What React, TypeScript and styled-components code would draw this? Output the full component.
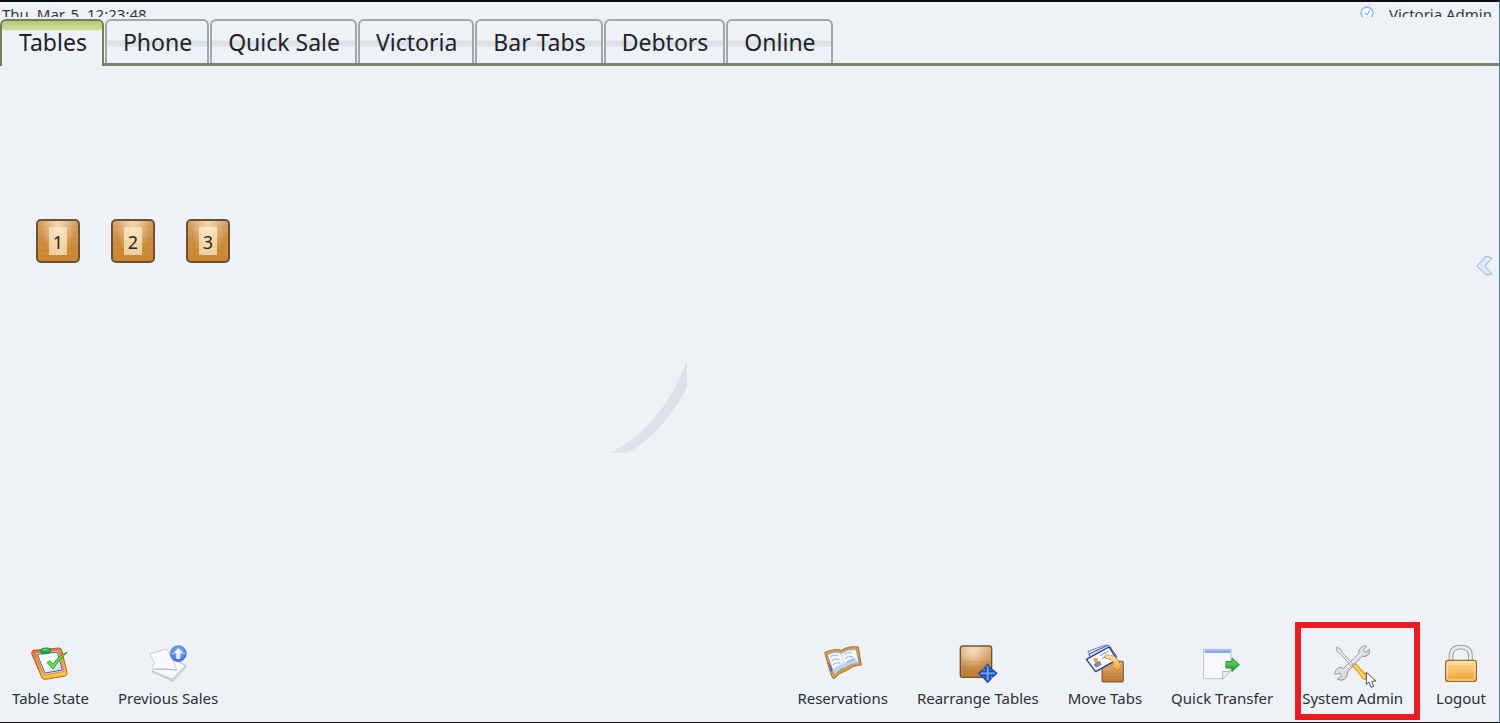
import React from "react";
import styled, { createGlobalStyle } from "styled-components";

const GlobalStyle = createGlobalStyle`
  * { box-sizing: border-box; }
  body {
    margin: 0;
    background: #eef2f7;
    color: #1f2328;
    font-family: "Noto Sans", "Open Sans", sans-serif;
  }
  button { font: inherit; color: inherit; }
`;

const Screen = styled.div`
  display: flex;
  flex-direction: column;
  min-height: 100vh;
  background: #eef2f7;
  border-top: 2px solid #0e0f12;
  border-right: 1px solid #3f87b5;
  border-bottom: 1px solid #0e0f12;
`;

const StatusBar = styled.header`
  display: flex;
  justify-content: space-between;
  height: 15px;
  padding: 0 7px 0 2px;
  overflow: hidden;
  font-size: 15px;
  line-height: 24px;
  color: #34383d;
`;

const CurrentUser = styled.span`
  display: flex;
  gap: 14px;
`;

const TabList = styled.nav`
  display: flex;
  gap: 1px;
  margin-top: 2px;
  border-bottom: 3px solid #7b876b;
`;

const Tab = styled.button<{ $active?: boolean }>`
  height: ${(p) => (p.$active ? 47 : 44)}px;
  margin-bottom: ${(p) => (p.$active ? -3 : 0)}px;
  padding: 0 15px 0 17px;
  border: 2px solid ${(p) => (p.$active ? "#71805a" : "#a3a7ac")};
  border-bottom: 0;
  border-radius: 6px 6px 0 0;
  background: ${(p) =>
    p.$active
      ? "linear-gradient(#b3c873 0, #d3e0a2 9px, #eef2f7 10px)"
      : "linear-gradient(#eff3f7 19px, #dde1e8 20px, #dde1e8 25px, #edf1f8 26px)"};
  font-size: 23px;
  line-height: 42px;
  display: flex;
  align-items: flex-start;

  & + & {
    padding: 0 15px 0 16px;
  }
`;

const Floor = styled.main`
  position: relative;
  flex: 1;
  display: flex;
  justify-content: space-between;
  align-items: flex-start;
  padding: 153px 6px 0 36px;
`;

const TableRow = styled.div`
  display: flex;
  gap: 31px;
`;

const TableButton = styled.button`
  display: grid;
  place-items: center;
  width: 44px;
  height: 44px;
  padding: 0;
  border: 2px solid #6b5236;
  border-radius: 5px;
  background:
    radial-gradient(ellipse at 50% 10%, rgba(255, 240, 215, 0.7), transparent 60%),
    repeating-linear-gradient(2deg, transparent 0 4px, rgba(150, 85, 15, 0.08) 5px 6px),
    linear-gradient(#d8a56c, #cf8e40 50%, #cc8730);
`;

const TableNumber = styled.span`
  padding: 2px 4px 0;
  background: rgba(255, 236, 205, 0.7);
  font-size: 18px;
  line-height: 26px;
  color: #2c2620;
`;

const Watermark = styled.svg`
  position: absolute;
  left: 610px;
  top: 294px;
`;

const CollapseButton = styled.button`
  display: flex;
  margin-top: 36px;
  padding: 0;
  border: 0;
  background: none;
`;

const ActionBar = styled.footer`
  display: flex;
  justify-content: space-between;
  padding: 0 13px 14px 12px;
`;

const ActionGroup = styled.div`
  display: flex;
  gap: 29px;
`;

const Action = styled.button<{ $marked?: boolean }>`
  position: relative;
  display: flex;
  flex-direction: column;
  align-items: center;
  gap: 4px;
  margin-right: ${(p) => (p.$marked ? 4 : 0)}px;
  padding: 0;
  border: 0;
  background: none;
  font-size: 15px;
  line-height: 20px;
  color: #2b2f35;
  white-space: nowrap;
`;

const Marker = styled.span`
  position: absolute;
  inset: -22px -17px -12px -7px;
  border: 6px solid #eb1c24;
  pointer-events: none;
`;

const ActionIcon = styled.svg`
  width: 40px;
  height: 40px;
  overflow: visible;
`;

const Icon = ({ children }: { children: React.ReactNode }) => (
  <ActionIcon viewBox="0 0 120 120" fill="none" strokeLinejoin="round" strokeLinecap="round" aria-hidden="true">
    {children}
  </ActionIcon>
);

const Gradients = () => (
  <svg width="0" height="0" style={{ display: "block" }} aria-hidden="true">
    <defs>
      <linearGradient id="wood" x1="0" y1="0" x2="0" y2="1">
        <stop offset="0" stopColor="#dcb07c" />
        <stop offset=".6" stopColor="#c98f4d" />
        <stop offset="1" stopColor="#c07a28" />
      </linearGradient>
      <radialGradient id="shine" cx=".4" cy=".15" r=".6">
        <stop offset="0" stopColor="#fff0d8" stopOpacity=".75" />
        <stop offset="1" stopColor="#fff0d8" stopOpacity="0" />
      </radialGradient>
      <linearGradient id="board" x1="0" y1="0" x2=".3" y2="1">
        <stop offset="0" stopColor="#e0703a" />
        <stop offset=".6" stopColor="#f0a02c" />
        <stop offset="1" stopColor="#ffc838" />
      </linearGradient>
      <linearGradient id="paper" x1="0" y1="0" x2="1" y2="1">
        <stop offset="0" stopColor="#ffffff" />
        <stop offset=".5" stopColor="#fafbff" />
        <stop offset="1" stopColor="#b9cdf2" />
      </linearGradient>
      <linearGradient id="green" x1="0" y1="0" x2="0" y2="1">
        <stop offset="0" stopColor="#7fe078" />
        <stop offset="1" stopColor="#189a32" />
      </linearGradient>
      <radialGradient id="blue" cx=".5" cy=".35" r=".6">
        <stop offset="0" stopColor="#8cb8fa" />
        <stop offset="1" stopColor="#3d72d8" />
      </radialGradient>
      <linearGradient id="gold" x1="0" y1="0" x2="0" y2="1">
        <stop offset="0" stopColor="#ffe3a6" />
        <stop offset="1" stopColor="#f2a22e" />
      </linearGradient>
      <linearGradient id="steel" x1="0" y1="0" x2="1" y2="1">
        <stop offset="0" stopColor="#ffffff" />
        <stop offset="1" stopColor="#b9bcc2" />
      </linearGradient>
    </defs>
  </svg>
);

const ClipboardIcon = () => (
  <Icon>
    <path d="M10 19 L88 12 Q93 12 95 18 L111 86 Q112 94 105 96 L46 106 Q38 107 35 99 L5 29 Q4 21 10 19Z" fill="url(#board)" stroke="#b65a26" strokeWidth="3" />
    <path d="M17 27 L85 20 L102 82 L43 93Z" fill="#ffe3ae" stroke="#c66" strokeWidth="2" />
    <path d="M23 31 L82 25 L97 78 L46 87Z" fill="url(#paper)" stroke="#4c62b4" strokeWidth="3" />
    <path d="M32 22 Q30 13 44 12 Q59 10 61 18 L61 25 Q48 32 35 29Z" fill="#25ae3e" stroke="#15802a" strokeWidth="2" />
    <path d="M39 18 Q46 14 54 18" stroke="#74dd7c" strokeWidth="4" />
    <path d="M52 56 L60 50 L69 61 Q88 33 111 25 Q86 48 69 75 Q61 67 52 56Z" fill="#74dc4c" stroke="#2b9a2e" strokeWidth="3" />
  </Icon>
);

const SalesIcon = () => (
  <Icon>
    <path d="M13 83 L20 72 L84 50 L114 65 L112 71 L75 111Z" fill="#d9dadf" stroke="#aeb0b7" strokeWidth="2" />
    <path d="M14 80 L24 66 L84 50 L112 65 L73 104Z" fill="#f8f9fd" stroke="#bbbdc5" strokeWidth="2" />
    <path d="M6 30 L56 15 Q76 44 86 78 L20 75 L12 66 L20 58Z" fill="#f9fafd" stroke="#b4b6bd" strokeWidth="2" />
    <path d="M20 75 L54 75 L86 78" stroke="#a3a5ad" strokeWidth="2" />
    <circle cx="91" cy="29" r="24" fill="url(#blue)" stroke="#4a78d2" strokeWidth="2" />
    <path d="M91 12 L106 28 H97 V45 H85 V28 H76Z" fill="#eaf3ff" />
    <path d="M71 29 H77 M105 29 H111" stroke="#c2dafe" strokeWidth="3" />
  </Icon>
);

const BookIcon = () => (
  <Icon>
    <path d="M6 25 Q34 12 55 19 Q77 5 106 9 L115 63 Q91 63 70 80 Q49 85 32 105 Q24 98 21 82Z" fill="#d59a4b" stroke="#ad7130" strokeWidth="3" />
    <path d="M16 51 L22 79 L27 77Z" fill="#e23f2b" />
    <path d="M18 58 L24 84 L29 78Z" fill="#3566d6" />
    <path d="M105 36 L111 57 L107 58Z" fill="#2ea743" />
    <path d="M14 32 Q37 20 54 28 Q75 14 99 17 L108 57 Q88 55 66 70 Q49 73 35 92Z" fill="#f3f8ff" stroke="#8d9dba" strokeWidth="2" />
    <path d="M56 54 L66 70 Q49 73 35 92 L31 77 Q42 64 56 62Z M92 40 L108 57 Q88 55 66 70 L63 58Z" fill="#bcd2fa" />
    <path d="M54 28 L66 70" stroke="#b3bfd4" strokeWidth="2" />
    <path d="M24 37 Q31 32 43 34 M27 50 Q34 44 47 46 M31 62 Q39 55 51 57 M64 31 Q71 24 84 26 M67 43 Q76 36 89 38 M71 55 Q81 47 95 49" stroke="#86abeb" strokeWidth="3" strokeDasharray="9 4" />
  </Icon>
);

const RearrangeIcon = () => (
  <Icon>
    <rect x="7" y="6" width="94" height="94" rx="7" fill="url(#wood)" stroke="#6e5437" strokeWidth="4" />
    <rect x="9" y="8" width="90" height="90" rx="5" fill="url(#shine)" />
    <path d="M12 56 Q50 48 96 58 M12 70 Q58 62 96 72 M12 84 Q45 78 90 84" stroke="#a66e2d" strokeOpacity=".4" strokeWidth="2" />
    <path d="M89 61 L100 73 H95 V82 H104 V77 L116 88 L104 99 V94 H95 V103 H100 L89 115 L78 103 H83 V94 H74 V99 L62 88 L74 77 V82 H83 V73 H78Z" fill="#3478ea" stroke="#1a48ad" strokeWidth="4" />
    <path d="M89 68 V107 M70 88 H108" stroke="#6fa8fb" strokeWidth="4" />
  </Icon>
);

const MoveTabsIcon = () => (
  <Icon>
    <path d="M9 22 L62 3 L80 12 L32 48Z" fill="#dfe6f7" stroke="#7580ad" strokeWidth="3" />
    <path d="M12 30 L70 3 L96 38 L40 76Z" fill="#c9d6f4" stroke="#4a58a4" strokeWidth="3" />
    <rect x="51" y="52" width="64" height="62" rx="3" fill="url(#wood)" stroke="#73583a" strokeWidth="3" />
    <path d="M54 90 Q80 84 112 91 M54 101 Q90 95 112 103" stroke="#a36a2b" strokeOpacity=".45" strokeWidth="2" />
    <path d="M4 46 L72 9 L96 47 L32 83Z" fill="#f7faff" stroke="#2d388b" strokeWidth="4" />
    <path d="M46 34 L70 22 M52 43 L64 37" stroke="#7e8aa8" strokeWidth="3" />
    <circle cx="32" cy="48" r="7" fill="#e8a14b" />
    <path d="M26 62 L34 55 L44 51 L50 62 L34 71Z" fill="#4a8df0" />
    <path d="M33 55 L39 66 L44 53" stroke="#e7762b" strokeWidth="4" />
    <path d="M62 33 Q97 30 102 57 L112 55 L101 82 L78 65 L88 61 Q84 46 62 43Z" fill="url(#gold)" stroke="#b9822c" strokeWidth="2" />
  </Icon>
);

const TransferIcon = () => (
  <Icon>
    <path d="M6 16 H87 V80 L62 104 H6Z" fill="#f8f9fd" stroke="#bec2ca" strokeWidth="3" />
    <path d="M8 17 H86 V27 H8Z" fill="#86a7ec" />
    <path d="M8 18 H86" stroke="#aec5f5" strokeWidth="3" />
    <path d="M62 104 V82 Q75 86 87 80Z" fill="#eceef3" stroke="#aeb2b9" strokeWidth="3" />
    <path d="M73 53 H90 V42 L112 62 L90 82 V72 H73Z" fill="url(#green)" stroke="#16852b" strokeWidth="3" />
  </Icon>
);

const ToolsIcon = () => (
  <Icon>
    <path d="M85 10 Q92 2 101 7 L91 18 L97 25 L109 16 Q113 27 103 35 Q96 39 87 37 L43 84 Q45 96 37 104 Q27 113 13 106 L25 96 L21 87 L7 92 Q3 78 17 72 Q24 69 32 73 L77 29 Q75 17 85 10Z" fill="url(#steel)" stroke="#94979d" strokeWidth="3" />
    <path d="M37 76 L82 31" stroke="#ffffff" strokeWidth="3" />
    <path d="M11 10 L22 15 L29 27 L63 64 L58 68 L23 31 L13 23Z" fill="#e8e9ed" stroke="#777b83" strokeWidth="2" />
    <path d="M59 61 L69 59 Q79 72 93 84 Q105 97 101 105 Q93 111 85 99 Q76 82 61 70Z" fill="#f8b52d" stroke="#bf7b1b" strokeWidth="2" />
    <path d="M66 65 Q77 78 95 101" stroke="#ffe28c" strokeWidth="4" />
    <path d="M100 86 V121 L108 114 L114 130 L122 127 L116 112 L128 111Z" fill="#fdfdfd" stroke="#4d5056" strokeWidth="3" />
  </Icon>
);

const PadlockIcon = () => (
  <Icon>
    <path d="M30 51 V35 Q31 9 59 9 Q88 9 88 35 V51" stroke="#8f9298" strokeWidth="14" strokeLinecap="butt" />
    <path d="M30 51 V35 Q31 9 59 9 Q88 9 88 35 V51" stroke="#e9eaed" strokeWidth="9" strokeLinecap="butt" />
    <rect x="14" y="49" width="92" height="63" rx="8" fill="url(#gold)" stroke="#9d682b" strokeWidth="4" />
    <rect x="18" y="53" width="84" height="55" rx="5" stroke="#ffe7b5" strokeWidth="3" />
    <path d="M20 68 H100 M20 78 H88 M34 88 H100 M20 98 H92" stroke="#df8b28" strokeOpacity=".4" strokeWidth="2" />
  </Icon>
);

const tabs = ["Tables", "Phone", "Quick Sale", "Victoria", "Bar Tabs", "Debtors", "Online"];

const leftActions = [
  { label: "Table State", icon: <ClipboardIcon /> },
  { label: "Previous Sales", icon: <SalesIcon /> },
];

const rightActions = [
  { label: "Reservations", icon: <BookIcon /> },
  { label: "Rearrange Tables", icon: <RearrangeIcon /> },
  { label: "Move Tabs", icon: <MoveTabsIcon /> },
  { label: "Quick Transfer", icon: <TransferIcon /> },
  { label: "System Admin", icon: <ToolsIcon />, marked: true },
  { label: "Logout", icon: <PadlockIcon /> },
];

type ActionItem = { label: string; icon: React.ReactNode; marked?: boolean };

const Actions = ({ items }: { items: ActionItem[] }) => (
  <ActionGroup>
    {items.map((item) => (
      <Action key={item.label} type="button" $marked={item.marked}>
        {item.icon}
        {item.label}
        {item.marked && <Marker />}
      </Action>
    ))}
  </ActionGroup>
);

export default function App() {
  return (
    <Screen>
      <GlobalStyle />
      <Gradients />
      <StatusBar>
        <span>Thu, Mar. 5, 12:23:48</span>
        <CurrentUser>
          <svg width="16" height="20" viewBox="0 0 16 20" fill="none" aria-hidden="true">
            <circle cx="8" cy="11" r="6" fill="#f3f7fd" stroke="#8fb2e2" strokeWidth="1.3" />
            <path d="M6 11 L8 13 L11 8" stroke="#7b98c4" />
          </svg>
          Victoria Admin
        </CurrentUser>
      </StatusBar>
      <TabList role="tablist">
        {tabs.map((name, i) => (
          <Tab key={name} type="button" role="tab" aria-selected={i === 0} $active={i === 0}>
            {name}
          </Tab>
        ))}
      </TabList>
      <Floor>
        <TableRow>
          {[1, 2, 3].map((n) => (
            <TableButton key={n} type="button">
              <TableNumber>{n}</TableNumber>
            </TableButton>
          ))}
        </TableRow>
        <Watermark width="78" height="94" viewBox="0 0 78 94" aria-hidden="true">
          <path d="M77 0 V27 Q54 72 17 93 H0 Q54 65 77 0Z" fill="#dde1e9" />
        </Watermark>
        <CollapseButton type="button" aria-label="Show side panel">
          <svg width="17" height="22" viewBox="0 0 17 22" aria-hidden="true">
            <path d="M10 1 L16 3 L9 11 L16 19 L10 20 L1 11Z" fill="#dfeafa" stroke="#92b1dd" strokeLinejoin="round" />
          </svg>
        </CollapseButton>
      </Floor>
      <ActionBar>
        <Actions items={leftActions} />
        <Actions items={rightActions} />
      </ActionBar>
    </Screen>
  );
}
